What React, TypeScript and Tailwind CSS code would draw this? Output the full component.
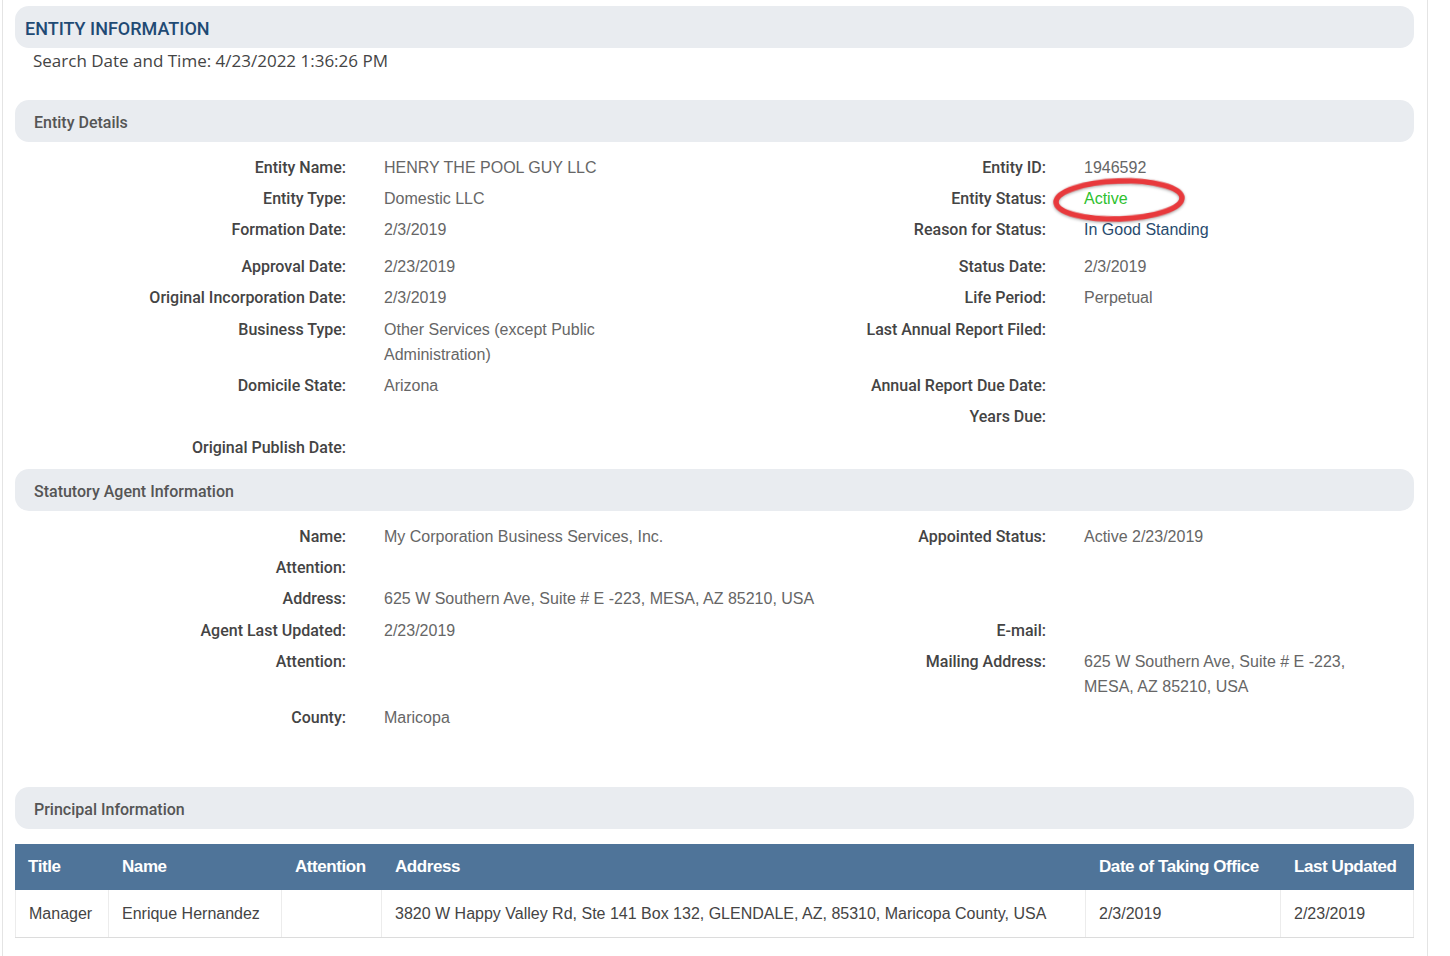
import React from "react";

type Pair = { label: string; value?: React.ReactNode };
type Row = { h: string; left?: Pair; right?: Pair };

const entityRows: Row[] = [
  { h: "h-[31px]", left: { label: "Entity Name:", value: "HENRY THE POOL GUY LLC" }, right: { label: "Entity ID:", value: "1946592" } },
  {
    h: "h-[31px]",
    left: { label: "Entity Type:", value: "Domestic LLC" },
    right: { label: "Entity Status:", value: <span className="relative text-[#2ec12e]">Active<StatusMark /></span> },
  },
  {
    h: "h-[37px]",
    left: { label: "Formation Date:", value: "2/3/2019" },
    right: { label: "Reason for Status:", value: <span className="text-[#284b6e]">In Good Standing</span> },
  },
  { h: "h-[31px]", left: { label: "Approval Date:", value: "2/23/2019" }, right: { label: "Status Date:", value: "2/3/2019" } },
  { h: "h-[32px]", left: { label: "Original Incorporation Date:", value: "2/3/2019" }, right: { label: "Life Period:", value: "Perpetual" } },
  {
    h: "h-[56px]",
    left: { label: "Business Type:", value: <>Other Services (except Public<br />Administration)</> },
    right: { label: "Last Annual Report Filed:" },
  },
  { h: "h-[31px]", left: { label: "Domicile State:", value: "Arizona" }, right: { label: "Annual Report Due Date:" } },
  { h: "h-[31px]", right: { label: "Years Due:" } },
  { h: "h-[31px]", left: { label: "Original Publish Date:" } },
];

const agentRows: Row[] = [
  { h: "h-[31px]", left: { label: "Name:", value: "My Corporation Business Services, Inc." }, right: { label: "Appointed Status:", value: "Active 2/23/2019" } },
  { h: "h-[31px]", left: { label: "Attention:" } },
  { h: "h-[32px]", left: { label: "Address:", value: "625 W Southern Ave, Suite # E -223, MESA, AZ 85210, USA" } },
  { h: "h-[31px]", left: { label: "Agent Last Updated:", value: "2/23/2019" }, right: { label: "E-mail:" } },
  {
    h: "h-[56px]",
    left: { label: "Attention:" },
    right: { label: "Mailing Address:", value: <>625 W Southern Ave, Suite # E -223,<br />MESA, AZ 85210, USA</> },
  },
  { h: "h-[31px]", left: { label: "County:", value: "Maricopa" } },
];

function StatusMark() {
  return (
    <svg
      className="absolute left-[-34px] top-[-15px] pointer-events-none"
      width="138"
      height="52"
      viewBox="0 0 138 52"
    >
      <ellipse
        cx="69"
        cy="25"
        rx="63"
        ry="19"
        transform="rotate(-2 69 25)"
        fill="none"
        stroke="#e8393c"
        strokeWidth="5.5"
        style={{ filter: "drop-shadow(0 1px 1.5px rgba(0,0,0,0.35))" }}
      />
    </svg>
  );
}

function SectionBar({ title }: { title: string }) {
  return (
    <div
      className="h-[42px] rounded-[14px] bg-[#e9ecf0] flex items-center pl-[19px] pt-[3px] text-[16px] font-medium text-[#555]"
      style={{ fontFamily: "Roboto, sans-serif" }}
    >
      {title}
    </div>
  );
}

function DetailRows({ rows }: { rows: Row[] }) {
  return (
    <div>
      {rows.map((r, i) => (
        <div key={i} className={`${r.h} flex pt-[3px] leading-[25px] text-[16px]`}>
          <div className="w-[331px] text-right font-medium text-[#444]" style={{ fontFamily: "Roboto, sans-serif" }}>
            {r.left?.label}
          </div>
          <div className="w-[300px] ml-[38px] text-[#666] whitespace-nowrap">{r.left?.value}</div>
          <div className="w-[362px] text-right font-medium text-[#444]" style={{ fontFamily: "Roboto, sans-serif" }}>
            {r.right?.label}
          </div>
          <div className="ml-[38px] text-[#666] whitespace-nowrap">{r.right?.value}</div>
        </div>
      ))}
    </div>
  );
}

const cols = [
  { t: "Title", w: "w-[94px]", v: "Manager" },
  { t: "Name", w: "w-[173px]", v: "Enrique Hernandez" },
  { t: "Attention", w: "w-[100px]", v: "" },
  { t: "Address", w: "w-[704px]", v: "3820 W Happy Valley Rd, Ste 141 Box 132, GLENDALE, AZ, 85310, Maricopa County, USA" },
  { t: "Date of Taking Office", w: "w-[195px]", v: "2/3/2019" },
  { t: "Last Updated", w: "flex-1", v: "2/23/2019" },
];

export default function App() {
  return (
    <div className="w-[1450px] h-[956px] bg-white overflow-hidden" style={{ fontFamily: "'Liberation Sans', Arial, sans-serif" }}>
      <div className="ml-[2px] w-[1426px] h-full border-l border-r border-[#e4e4e4] pl-[12px] pr-[13px] pt-[6px]">
        <div
          className="h-[42px] rounded-[14px] bg-[#e9ecf0] flex items-center pl-[10px] pt-[2px] text-[18px] font-medium text-[#1f4a74]"
          style={{ fontFamily: "Roboto, sans-serif" }}
        >
          ENTITY INFORMATION
        </div>
        <div
          className="pl-[18px] h-[26px] leading-[26px] text-[17px] font-medium text-[#444]"
          style={{ fontFamily: "'Open Sans', sans-serif" }}
        >
          Search Date and Time: 4/23/2022 1:36:26 PM
        </div>

        <div className="mt-[26px]">
          <SectionBar title="Entity Details" />
        </div>
        <div className="pt-[10px]">
          <DetailRows rows={entityRows} />
        </div>

        <div className="mt-[6px]">
          <SectionBar title="Statutory Agent Information" />
        </div>
        <div className="pt-[10px]">
          <DetailRows rows={agentRows} />
        </div>

        <div className="mt-[54px]">
          <SectionBar title="Principal Information" />
        </div>

        <div className="mt-[15px] border-b border-[#dcdcdc]">
          <div className="h-[46px] bg-[#4f7499] flex items-center text-white font-bold text-[17px] tracking-tight">
            {cols.map((c) => (
              <div key={c.t} className={`${c.w} px-[13px] whitespace-nowrap`}>{c.t}</div>
            ))}
          </div>
          <div className="h-[47px] flex text-[16px] text-[#444]">
            {cols.map((c, i) => (
              <div
                key={c.t}
                className={`${c.w} px-[13px] flex items-center whitespace-nowrap ${i === 0 ? "border-l" : ""} border-r border-[#ececec]`}
              >
                {c.v}
              </div>
            ))}
          </div>
        </div>
      </div>
    </div>
  );
}
